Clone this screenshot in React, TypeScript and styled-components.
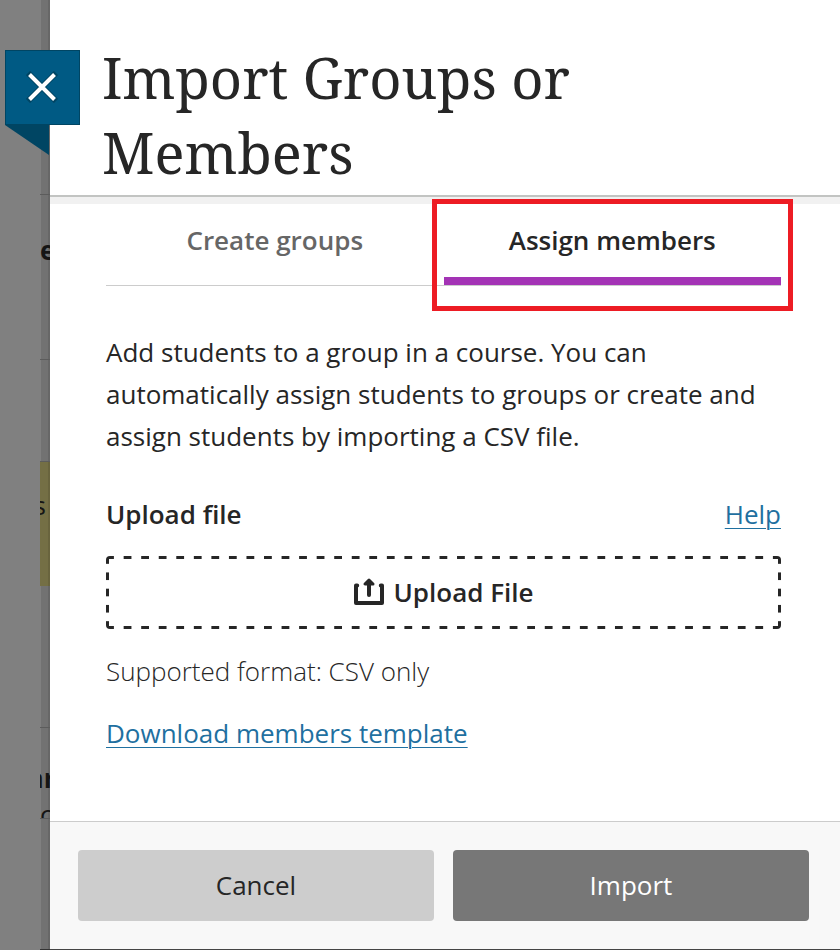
import React from 'react';
import styled, { createGlobalStyle } from 'styled-components';

const GlobalStyle = createGlobalStyle`
  *, *::before, *::after { box-sizing: border-box; }
  body {
    margin: 0;
    background: #fff;
    color: #262626;
    font: 400 26px/42px 'Open Sans', 'Noto Sans', sans-serif;
  }
  button { font: inherit; color: inherit; cursor: pointer; }
`;

const Page = styled.div`
  display: flex;
  min-height: 100vh;
`;

const Scrim = styled.div`
  flex: 0 0 40px;
  background: #808080;
`;

const CoursePage = styled.div`
  flex: 0 0 10px;
  overflow: hidden;
  display: flex;
  flex-direction: column;
  background: linear-gradient(90deg, #808080 1px, #727272 1px 8px, #676767 8px);
  border-bottom: 1px solid #333;
`;

const CourseRow = styled.div<{ $height: number; $top?: number; $marked?: boolean }>`
  flex: 0 0 ${p => p.$height}px;
  padding-top: ${p => p.$top ?? 0}px;
  overflow: hidden;
  display: flex;
  flex-direction: column;
  align-items: flex-start;
  border-bottom: 1px solid #5c5c5c;
  ${p => p.$marked && `
    align-items: flex-end;
    padding-right: 4px;
    border-bottom: 0;
    background: linear-gradient(90deg, #746f45 8px, #69643e 8px);
  `}
`;

const CourseText = styled.span<{ $bold?: boolean; $scrolled?: boolean }>`
  flex: none;
  color: #151515;
  line-height: 36px;
  font-weight: ${p => (p.$bold ? 700 : 400)};
  margin-left: ${p => (p.$scrolled ? -12 : 0)}px;
`;

const Panel = styled.main`
  position: relative;
  flex: 1;
  min-width: 0;
  display: flex;
  flex-direction: column;
  background: #fff;
`;

const CloseButton = styled.button`
  position: absolute;
  top: 50px;
  left: -45px;
  width: 75px;
  height: 75px;
  padding: 0 2px 2px 0;
  display: grid;
  place-items: center;
  background: #005a84;
  border: 1px solid #004563;
`;

const RibbonFold = styled.span`
  position: absolute;
  top: 125px;
  left: -45px;
  width: 44px;
  height: 30px;
  background: #004563;
  clip-path: polygon(0 0, 100% 0, 100% 100%);
`;

const Header = styled.header`
  padding: 40px 31px 5px 52px;
  border-bottom: 2px solid #c2c4c2;
`;

const Title = styled.h1`
  margin: 0;
  max-width: 560px;
  font: 400 56px/75px 'Noto Serif', 'DejaVu Serif Condensed', 'DejaVu Serif', serif;
`;

const HeaderShade = styled.div`
  height: 7px;
  background: #f1f1f1;
`;

const Body = styled.section`
  flex: 1;
  padding: 0 59px 67px 56px;
`;

const Tabs = styled.div`
  display: grid;
  grid-template-columns: 1fr 1fr;
  border-bottom: 1px solid #ccc;
`;

const Tab = styled.button<{ $active?: boolean }>`
  position: relative;
  height: 81px;
  padding: 0;
  background: none;
  border: solid transparent;
  border-width: 8px 0;
  border-bottom-color: ${p => (p.$active ? '#a333b5' : 'transparent')};
  color: ${p => (p.$active ? '#262626' : '#666')};
  font-weight: 600;
  line-height: 56px;
  display: flex;
  align-items: flex-start;
  justify-content: center;
`;

const Highlight = styled.span`
  position: absolute;
  inset: -13px -12px -34px;
  border: 5px solid #ed1c24;
  pointer-events: none;
`;

const Intro = styled.p`
  margin: 45px 0 36px;
`;

const LabelRow = styled.div`
  display: flex;
  justify-content: space-between;
  margin-bottom: 21px;
`;

const FieldLabel = styled.label`
  font-weight: 600;
`;

const Link = styled.a`
  color: #1f70a0;
  text-decoration: underline;
  text-decoration-thickness: 1px;
  text-underline-offset: 4px;
`;

const UploadButton = styled.button`
  --h: linear-gradient(90deg, #262626 4px, transparent 4px calc(100% - 4px), #262626 calc(100% - 4px));
  --v: linear-gradient(#262626 4px, transparent 4px calc(100% - 4px), #262626 calc(100% - 4px));
  width: 100%;
  height: 73px;
  padding: 0 0 2px;
  display: flex;
  align-items: center;
  justify-content: center;
  gap: 8px;
  border: 4px solid transparent;
  border-radius: 4px;
  background-color: #fff;
  background-image: var(--h), var(--h), var(--v), var(--v);
  background-repeat: repeat-x, repeat-x, repeat-y, repeat-y;
  background-size: calc(100% / 38) 3px, calc(100% / 38) 3px, 3px calc(100% / 4), 3px calc(100% / 4);
  background-position: 0 -4px, 0 calc(100% + 4px), -4px 0, calc(100% + 4px) 0;
  background-origin: padding-box;
  background-clip: border-box;
  font-weight: 600;
`;

const Hint = styled.p`
  margin: 21px 0 20px;
  font-weight: 300;
`;

const Footer = styled.footer`
  display: grid;
  grid-template-columns: 1fr 1fr;
  gap: 19px;
  padding: 28px 31px 28px 28px;
  background: #f8f8f8;
  border-top: 1px solid #ccc;
  border-bottom: 1px solid #444;
`;

const ActionButton = styled.button<{ $primary?: boolean }>`
  height: 71px;
  padding: 0 0 2px;
  border: 0;
  border-radius: 4px;
  background: ${p => (p.$primary ? '#777' : '#cdcdcd')};
  color: ${p => (p.$primary ? '#fff' : '#262626')};
`;

const CloseIcon = () => (
  <svg width="32" height="32" viewBox="0 0 32 32" fill="none" aria-hidden="true">
    <path d="M2 2 30 30M30 2 2 30" stroke="#004563" strokeWidth="6" />
    <path d="M3.500 3.500 28.500 28.500M28.500 3.500 3.500 28.500" stroke="#fff" strokeWidth="4" />
  </svg>
);

const UploadIcon = () => (
  <svg width="32" height="28" viewBox="0 0 32 28" fill="none" stroke="#262626" strokeWidth="4" strokeLinecap="round" strokeLinejoin="round" aria-hidden="true">
    <path d="M3.200 7.500H2V25h26V7.500h-1.200" />
    <path d="M15 17V4" />
    <path d="M15 2.200 11 6h8z" fill="#262626" strokeWidth="3" />
  </svg>
);

export default function App() {
  return (
    <>
      <GlobalStyle />
      <Page>
        <Scrim />
        <CoursePage aria-hidden="true">
          <CourseRow $height={195} />
          <CourseRow $height={165} $top={37}><CourseText $bold>e</CourseText></CourseRow>
          <CourseRow $height={102} />
          <CourseRow $height={124} $top={25} $marked><CourseText>s</CourseText></CourseRow>
          <CourseRow $height={142} />
          <CourseRow $height={91} $top={32}>
            <CourseText $bold $scrolled>ar</CourseText>
            <CourseText>c</CourseText>
          </CourseRow>
        </CoursePage>
        <Panel>
          <RibbonFold />
          <CloseButton type="button" aria-label="Close"><CloseIcon /></CloseButton>
          <Header>
            <Title>Import Groups or Members</Title>
          </Header>
          <HeaderShade />
          <Body>
            <Tabs role="tablist">
              <Tab type="button" role="tab" aria-selected={false}>Create groups</Tab>
              <Tab type="button" role="tab" aria-selected $active>
                Assign members
                <Highlight />
              </Tab>
            </Tabs>
            <Intro>
              Add students to a group in a course. You can automatically assign students to groups
              or create and assign students by importing a CSV file.
            </Intro>
            <LabelRow>
              <FieldLabel htmlFor="upload">Upload file</FieldLabel>
              <Link href="#help">Help</Link>
            </LabelRow>
            <UploadButton type="button" id="upload">
              <UploadIcon />
              Upload File
            </UploadButton>
            <Hint>Supported format: CSV only</Hint>
            <Link href="#template">Download members template</Link>
          </Body>
          <Footer>
            <ActionButton type="button">Cancel</ActionButton>
            <ActionButton type="button" $primary>Import</ActionButton>
          </Footer>
        </Panel>
      </Page>
    </>
  );
}
